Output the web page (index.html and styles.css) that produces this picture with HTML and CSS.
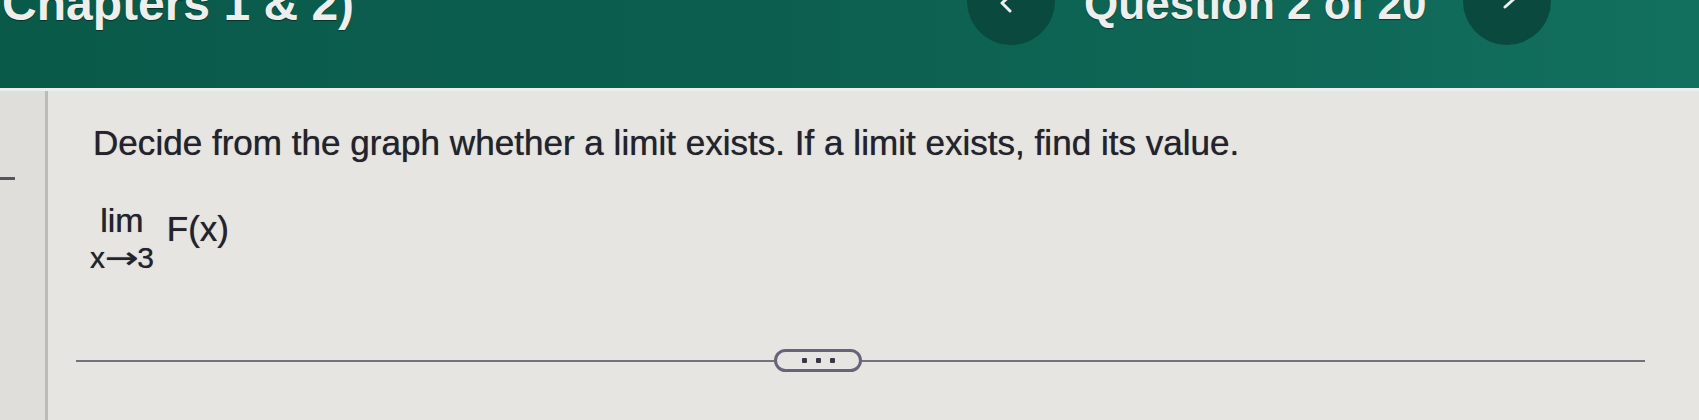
FILE: index.html
```html
<!DOCTYPE html>
<html lang="en">
<head>
<meta charset="utf-8">
<title>Question 2 of 20</title>
<link rel="stylesheet" href="styles.css">
</head>
<body>
<header class="topbar">
  <div class="title">Chapters 1 &amp; 2)</div>
  <nav class="qnav">
    <button class="navbtn" aria-label="Previous question">
      <svg class="chev chev-left" width="16" height="20" viewBox="0 0 16 20"><path d="M13 1 L4 9 L12 17" fill="none" stroke="#eef0ee" stroke-width="3" stroke-linecap="round" stroke-linejoin="round"/></svg>
    </button>
    <div class="qcount">Question 2 of 20</div>
    <button class="navbtn" aria-label="Next question">
      <svg class="chev chev-right" width="16" height="20" viewBox="0 0 16 20"><path d="M4 1 L13 8 L4 16" fill="none" stroke="#eef0ee" stroke-width="3" stroke-linecap="round" stroke-linejoin="round"/></svg>
    </button>
  </nav>
</header>
<main class="page">
  <aside class="rail"><span class="rail-dash"></span></aside>
  <section class="content">
    <p class="prompt">Decide from the graph whether a limit exists. If a limit exists, find its value.</p>
    <div class="limit">
      <div class="lim-col">
        <span class="lim">lim</span>
        <span class="sub">x<span class="arrow">→</span>3</span>
      </div>
      <span class="fx">F(x)</span>
    </div>
    <div class="divider">
      <span class="rule rule-left"></span>
      <button class="more" aria-label="More"><i></i><i></i><i></i></button>
      <span class="rule rule-right"></span>
    </div>
  </section>
</main>
</body>
</html>
```

FILE: styles.css
```css
* { box-sizing: border-box; }

html, body {
  margin: 0;
  padding: 0;
  width: 1699px;
  height: 420px;
  overflow: hidden;
}

body {
  background: #e4e3df;
  font-family: "Liberation Sans", Arial, sans-serif;
  color: #26252c;
}

.topbar {
  height: 88px;
  display: flex;
  align-items: flex-start;
  overflow: hidden;
  background: linear-gradient(90deg, #0a5a4a 0%, #0c5f4f 45%, #0f6756 75%, #12705f 100%);
}

.title {
  margin: -20px 0 0 2px;
  font-size: 48px;
  line-height: 48px;
  font-weight: bold;
  color: #eeefec;
  white-space: nowrap;
  text-shadow: 0 1px 1px rgba(0, 0, 0, 0.45);
}

.qnav {
  display: flex;
  align-items: flex-start;
  margin-left: 613px;
}

.navbtn {
  width: 88px;
  height: 88px;
  margin-top: -43px;
  padding: 0;
  border: none;
  border-radius: 50%;
  background: #0a4a3e;
  display: flex;
  align-items: center;
  justify-content: center;
}

.chev-left { margin: 6px 10px 0 0; }
.chev-right { margin: 0 0 0 3px; }

.qcount {
  margin: -18px 37px 0 29px;
  font-size: 44px;
  line-height: 44px;
  font-weight: bold;
  color: #eeefec;
  white-space: nowrap;
  text-shadow: 0 1px 1px rgba(0, 0, 0, 0.45);
}

.page {
  display: flex;
  height: 332px;
  border-top: 3px solid #eceded;
}

.rail {
  flex: none;
  width: 48px;
  background: #dfdedb;
  border-right: 3px solid #bdbbb8;
  padding-top: 86px;
}

.rail-dash {
  display: block;
  width: 15px;
  height: 3px;
  background: #56555a;
}

.content {
  flex: 1;
  background: #e6e5e2;
  padding: 32px 0 0 45px;
  color: #24232c;
  text-shadow: 0 0 0.7px rgba(30, 28, 40, 0.8);
}

.prompt {
  margin: 0;
  font-size: 35.1px;
  line-height: 40px;
  white-space: nowrap;
}

.limit {
  display: flex;
  align-items: flex-start;
  margin-top: 40px;
  margin-left: -3px;
}

.lim-col {
  display: flex;
  flex-direction: column;
  align-items: center;
}

.lim {
  font-size: 34px;
  line-height: 34px;
}

.sub {
  margin-top: 6px;
  font-size: 30px;
  line-height: 30px;
  white-space: nowrap;
}

.arrow {
  display: inline-block;
  font-family: "DejaVu Sans", sans-serif;
  transform: scaleX(1.35);
  margin: 0 3px 0 4px;
}

.fx {
  margin: 8px 0 0 13px;
  font-size: 35px;
  line-height: 35px;
}

.divider {
  display: flex;
  align-items: center;
  width: 1569px;
  margin: 76px 0 0 -17px;
}

.rule {
  height: 2px;
  background: #75707e;
}

.rule-left { flex: none; width: 698px; }
.rule-right { flex: 1; }

.more {
  flex: none;
  width: 88px;
  height: 23px;
  padding: 0;
  border: 3px solid #68637a;
  border-radius: 12px;
  background: #e6e5e2;
  display: flex;
  align-items: center;
  justify-content: center;
  gap: 9px;
}

.more i {
  display: block;
  width: 5px;
  height: 5px;
  border-radius: 1px;
  background: #3b3646;
}
```
